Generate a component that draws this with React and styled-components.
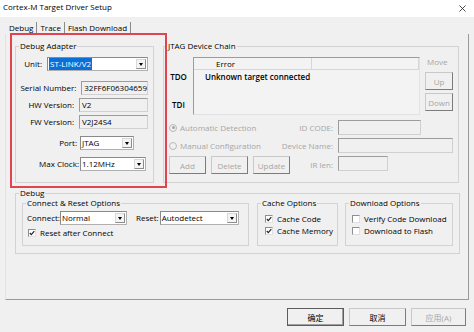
import React from 'react'
import styled, { createGlobalStyle } from 'styled-components'

const GlobalStyle = createGlobalStyle`
  html, body {
    margin: 0;
    padding: 0;
    background: #f0f0f0;
  }
  body {
    font-family: "Open Sans", "Noto Sans CJK SC", sans-serif;
    font-size: 8px;
    color: #000;
  }
`

const Window = styled.div`
  position: relative;
  width: 474px;
  height: 332px;
  overflow: hidden;
  background: #f0f0f0;
  display: flex;
  flex-direction: column;
`

const TitleBar = styled.div`
  height: 17px;
  flex: none;
  background: #fff;
  display: flex;
  align-items: flex-start;
  justify-content: space-between;
  padding: 1px 8px 0 3px;
  box-sizing: border-box;
`

const Title = styled.span`
  line-height: 12px;
  font-size: 8px;
`

const CloseBox = styled.svg`
  margin-top: 4px;
`

const TabStrip = styled.div`
  height: 17px;
  flex: none;
  display: flex;
  align-items: flex-end;
  padding-left: 6px;
  box-sizing: border-box;
`

const Tab = styled.div`
  height: 11px;
  line-height: 11px;
  padding: 0 3px;
  border-right: 1px solid #8a8a8a;
  margin-bottom: 1px;
`

const Page = styled.div`
  box-sizing: border-box;
  width: 464px;
  height: 266px;
  margin-left: 5px;
  flex: none;
  border-left: 1px solid #e3e3e3;
  border-right: 1px solid #9a9a9a;
  border-bottom: 1px solid #9a9a9a;
  padding: 7px 0 0 9px;
  display: flex;
  flex-direction: column;
`

const TopRow = styled.div`
  display: flex;
  gap: 9px;
`

// group boxes
const Group = styled.fieldset`
  box-sizing: border-box;
  margin: 0;
  margin-left: ${p => p.$ml || 0}px;
  margin-top: ${p => p.$mt || 0}px;
  padding: 0;
  min-width: 0;
  flex: none;
  width: ${p => p.$w}px;
  height: ${p => p.$h}px;
  border: 1px solid #d3d3d3;
`

const Caption = styled.legend`
  margin-left: 3px;
  padding: 0 1px;
  font-size: 8px;
  line-height: 10px;
  color: #000;
`

const AdapterBody = styled.div`
  padding: 0 5px;
  display: flex;
  flex-direction: column;
`

const FormRow = styled.div`
  display: flex;
  align-items: center;
  justify-content: flex-end;
  gap: ${p => p.$gap}px;
  margin-top: ${p => p.$top}px;
  padding-right: ${p => p.$trail || 0}px;
`

const Label = styled.span`
  line-height: 10px;
  white-space: nowrap;
  color: ${p => (p.$off ? '#a6a6a6' : '#000')};
`

const Field = styled.div`
  box-sizing: border-box;
  width: ${p => p.$w}px;
  height: ${p => p.$h || 14}px;
  border: 1px solid #d0d0d0;
  border-top-color: #9c9c9c;
  border-left-color: #9c9c9c;
  background: #f0f0f0;
  padding-left: 2px;
  line-height: ${p => (p.$h || 14) - 2}px;
  white-space: nowrap;
`

const Combo = styled.div`
  box-sizing: border-box;
  width: ${p => p.$w}px;
  height: 14px;
  border: 1px solid #b0b0b0;
  border-top-color: #8a8a8a;
  border-left-color: #8a8a8a;
  background: #fff;
  display: flex;
  align-items: stretch;
`

const ComboText = styled.div`
  flex: 1;
  padding: 0 0 0 1px;
  line-height: 12px;
  white-space: nowrap;
  overflow: hidden;
`

const Selected = styled.span`
  display: inline-block;
  height: 12px;
  padding: 0 1px;
  background: #0a6fd8;
  color: #fff;
`

const Arrow = styled.div`
  box-sizing: border-box;
  width: 10px;
  margin: 1px;
  border: 1px solid #d8d8d8;
  border-right-color: #8c8c8c;
  border-bottom-color: #8c8c8c;
  background: #f4f4f4;
  display: flex;
  align-items: center;
  justify-content: center;

  &::after {
    content: '';
    border-left: 2.5px solid transparent;
    border-right: 2.5px solid transparent;
    border-top: 3px solid #000;
  }
`

// JTAG device chain
const JtagBody = styled.div`
  padding: 0 5px;
`

const ChainRow = styled.div`
  display: flex;
  margin-top: 6px;
`

const PinCol = styled.div`
  width: 20px;
  display: flex;
  flex-direction: column;
  align-items: center;
  padding-top: 14px;
  gap: 16px;
  line-height: 12px;
  font-weight: 600;
`

const ListBox = styled.div`
  box-sizing: border-box;
  width: 227px;
  height: 58px;
  margin-left: 5px;
  border: 1px solid #e2e2e2;
  border-top-color: #9c9c9c;
  border-left-color: #9c9c9c;
  background: #f3f3f3;
`

const ListHead = styled.div`
  display: flex;
  height: 12px;
`

const HeadCell = styled.div`
  box-sizing: border-box;
  width: ${p => p.$w}px;
  height: 12px;
  line-height: 11px;
  padding-left: ${p => p.$pad || 0}px;
  border-right: 1px solid #d6d6d6;
  border-bottom: 1px solid #d6d6d6;
`

const ListItem = styled.div`
  padding-left: 11px;
  margin-top: 1px;
  line-height: 12px;
  font-weight: 600;
`

const MoveCol = styled.div`
  width: 28px;
  margin-left: 5px;
  display: flex;
  flex-direction: column;
`

const MoveLabel = styled.div`
  line-height: 10px;
  padding-left: 2px;
  color: #a6a6a6;
`

const Button = styled.div`
  box-sizing: border-box;
  width: ${p => p.$w}px;
  height: 18px;
  margin-top: ${p => p.$top || 0}px;
  border: 1px solid #c9c9c9;
  border-right-color: #7c7c7c;
  border-bottom-color: #7c7c7c;
  background: #f0f0f0;
  display: flex;
  align-items: center;
  justify-content: center;
  color: ${p => (p.$off ? '#a6a6a6' : '#000')};
  font-family: "Open Sans", "Noto Sans CJK SC", sans-serif;
  flex: none;
`

const DefaultButton = styled(Button)`
  border: 1px solid #5c5c5c;
  box-shadow: inset -1px -1px 0 #a0a0a0;
`

const ConfigGrid = styled.div`
  display: grid;
  grid-template-columns: minmax(0, 1fr) auto 115px;
  grid-template-rows: 15px 15px 18px;
  column-gap: 5px;
  row-gap: 3px;
  margin-top: 5px;
  align-items: center;
`

const RadioRow = styled.div`
  display: flex;
  align-items: center;
  gap: 3px;
  color: #a6a6a6;
  line-height: 10px;
  white-space: nowrap;
`

const RadioDot = styled.span`
  box-sizing: border-box;
  width: 8px;
  height: 8px;
  border-radius: 50%;
  border: 1px solid #b8b8b8;
  background: #f0f0f0;
  display: flex;
  align-items: center;
  justify-content: center;

  &::after {
    content: '';
    width: 3px;
    height: 3px;
    border-radius: 50%;
    background: ${p => (p.$on ? '#a6a6a6' : 'transparent')};
  }
`

const ButtonRow = styled.div`
  display: flex;
  gap: 5px;
  align-self: start;
`

const GridLabel = styled(Label)`
  justify-self: end;
`

const GridField = styled(Field)`
  align-self: start;
`

// Debug section
const DebugBody = styled.div`
  display: flex;
  padding: 0 6px;
`

const GroupBody = styled.div`
  padding-left: ${p => p.$pad}px;
  display: flex;
  flex-direction: column;
`

const ConnectRow = styled.div`
  display: flex;
  align-items: center;
  margin-top: 3px;
`

const CheckRow = styled.div`
  display: flex;
  align-items: center;
  gap: 4px;
  margin-top: ${p => p.$top}px;
  margin-left: ${p => p.$ml || 0}px;
  line-height: 10px;
  white-space: nowrap;
`

const CheckBox = styled.span`
  box-sizing: border-box;
  width: 8px;
  height: 8px;
  flex: none;
  border: 1px solid #e0e0e0;
  border-top-color: #8e8e8e;
  border-left-color: #8e8e8e;
  background: #fff;
  display: flex;
  align-items: center;
  justify-content: center;
`

const BottomBar = styled.div`
  display: flex;
  justify-content: flex-end;
  gap: 5px;
  padding: 8px 8px 0 0;
`

const RedFrame = styled.div`
  position: absolute;
  left: 10px;
  top: 33px;
  width: 157px;
  height: 155px;
  box-sizing: border-box;
  border: 2px solid #e2434f;
  pointer-events: none;
`

const Check = ({ on }) => (
  <CheckBox>
    {on && (
      <svg width="6" height="6" viewBox="0 0 6 6">
        <path d="M0.8 3 L2.3 4.6 L5.3 1.2" fill="none" stroke="#222" strokeWidth="1.2" />
      </svg>
    )}
  </CheckBox>
)

const Dropdown = ({ w, children }) => (
  <Combo $w={w}>
    <ComboText>{children}</ComboText>
    <Arrow />
  </Combo>
)

export default function App() {
  return (
    <>
      <GlobalStyle />
      <Window>
        <TitleBar>
          <Title>Cortex-M Target Driver Setup</Title>
          <CloseBox width="7" height="7" viewBox="0 0 7 7">
            <path d="M0.5 0.5 L6.5 6.5 M6.5 0.5 L0.5 6.5" stroke="#333" strokeWidth="0.9" />
          </CloseBox>
        </TitleBar>
        <TabStrip>
          <Tab>Debug</Tab>
          <Tab>Trace</Tab>
          <Tab>Flash Download</Tab>
        </TabStrip>
        <Page>
          <TopRow>
            <Group $w={139} $h={142}>
              <Caption>Debug Adapter</Caption>
              <AdapterBody>
                <FormRow $top={6} $gap={5}>
                  <Label>Unit:</Label>
                  <Dropdown w={101}>
                    <Selected>ST-LINK/V2</Selected>
                  </Dropdown>
                </FormRow>
                <FormRow $top={10} $gap={5}>
                  <Label>Serial Number:</Label>
                  <Field $w={69}>32FF6F06304659</Field>
                </FormRow>
                <FormRow $top={3} $gap={5}>
                  <Label>HW Version:</Label>
                  <Field $w={69}>V2</Field>
                </FormRow>
                <FormRow $top={3} $gap={5}>
                  <Label>FW Version:</Label>
                  <Field $w={69}>V2J24S4</Field>
                </FormRow>
                <FormRow $top={7} $gap={3} $trail={14}>
                  <Label>Port:</Label>
                  <Dropdown w={54}>JTAG</Dropdown>
                </FormRow>
                <FormRow $top={7} $gap={1} $trail={2}>
                  <Label>Max Clock:</Label>
                  <Dropdown w={66}>1.12MHz</Dropdown>
                </FormRow>
              </AdapterBody>
            </Group>

            <Group $w={296} $h={142}>
              <Caption>JTAG Device Chain</Caption>
              <JtagBody>
                <ChainRow>
                  <PinCol>
                    <span>TDO</span>
                    <span>TDI</span>
                  </PinCol>
                  <ListBox>
                    <ListHead>
                      <HeadCell $w={118} $pad={22}>Error</HeadCell>
                      <HeadCell $w={107} />
                    </ListHead>
                    <ListItem>Unknown target connected</ListItem>
                  </ListBox>
                  <MoveCol>
                    <MoveLabel>Move</MoveLabel>
                    <Button $w={28} $top={5} $off>Up</Button>
                    <Button $w={28} $top={3} $off>Down</Button>
                  </MoveCol>
                </ChainRow>
                <ConfigGrid>
                  <RadioRow>
                    <RadioDot $on />
                    Automatic Detection
                  </RadioRow>
                  <GridLabel $off>ID CODE:</GridLabel>
                  <GridField $w={83} $h={15} />
                  <RadioRow>
                    <RadioDot />
                    Manual Configuration
                  </RadioRow>
                  <GridLabel $off>Device Name:</GridLabel>
                  <GridField $w={115} $h={15} />
                  <ButtonRow>
                    <Button $w={37} $off>Add</Button>
                    <Button $w={37} $off>Delete</Button>
                    <Button $w={37} $off>Update</Button>
                  </ButtonRow>
                  <GridLabel $off style={{ alignSelf: 'start', marginTop: 4 }}>IR len:</GridLabel>
                  <GridField $w={50} $h={15} />
                </ConfigGrid>
              </JtagBody>
            </Group>
          </TopRow>

          <Group $w={445} $h={66} $mt={5}>
            <Caption>Debug</Caption>
            <DebugBody>
              <Group $w={227} $h={48}>
                <Caption>Connect &amp; Reset Options</Caption>
                <GroupBody $pad={4}>
                  <ConnectRow>
                    <Label>Connect:</Label>
                    <Dropdown w={67}>Normal</Dropdown>
                    <Label style={{ margin: '0 1px 0 9px' }}>Reset:</Label>
                    <Dropdown w={79}>Autodetect</Dropdown>
                  </ConnectRow>
                  <CheckRow $top={3} $ml={1}>
                    <Check on />
                    Reset after Connect
                  </CheckRow>
                </GroupBody>
              </Group>
              <Group $w={81} $h={48} $ml={8}>
                <Caption>Cache Options</Caption>
                <GroupBody $pad={7}>
                  <CheckRow $top={6}>
                    <Check on />
                    Cache Code
                  </CheckRow>
                  <CheckRow $top={2}>
                    <Check on />
                    Cache Memory
                  </CheckRow>
                </GroupBody>
              </Group>
              <Group $w={108} $h={48} $ml={7}>
                <Caption>Download Options</Caption>
                <GroupBody $pad={6}>
                  <CheckRow $top={6}>
                    <Check />
                    Verify Code Download
                  </CheckRow>
                  <CheckRow $top={2}>
                    <Check />
                    Download to Flash
                  </CheckRow>
                </GroupBody>
              </Group>
            </DebugBody>
          </Group>
        </Page>

        <BottomBar>
          <DefaultButton $w={57}>确定</DefaultButton>
          <Button $w={57}>取消</Button>
          <Button $w={55} $off>应用(A)</Button>
        </BottomBar>

        <RedFrame />
      </Window>
    </>
  )
}
